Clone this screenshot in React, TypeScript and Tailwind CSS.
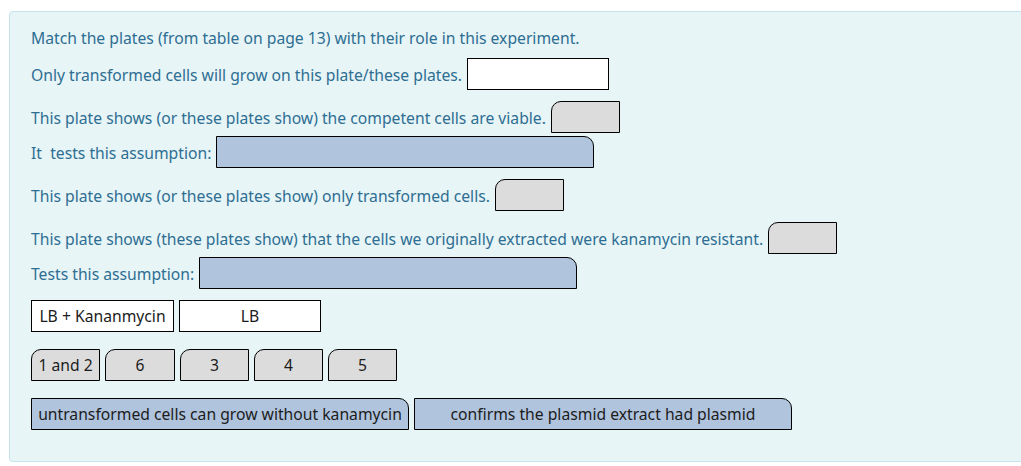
const text = "text-[#2e6e92]";

function Drop(props: { kind: "white" | "gray" | "blue"; w: string }) {
  const styles = {
    white: "bg-white",
    gray: "bg-[#dcdcdc] rounded-tl-[10px]",
    blue: "bg-[#b0c4de] rounded-tr-[10px]",
  };
  return (
    <span
      className={`ml-[5px] inline-block h-[32px] border border-black ${props.w} ${styles[props.kind]}`}
    />
  );
}

function Item(props: { label: string; kind: "white" | "gray" | "blue"; w: string }) {
  const styles = {
    white: "bg-white",
    gray: "bg-[#dcdcdc] rounded-tl-[10px]",
    blue: "bg-[#b0c4de] rounded-tr-[10px]",
  };
  return (
    <div
      className={`flex h-[32px] items-center justify-center border border-black pt-[2px] text-[#1c1c1c] whitespace-nowrap ${props.w} ${styles[props.kind]}`}
    >
      {props.label}
    </div>
  );
}

export default function App() {
  return (
    <div className="h-[466px] w-[1021px] overflow-hidden bg-white pt-[11px] pl-[9px] font-['Noto_Sans',sans-serif] text-[15.7px]">
      <div className="w-[1030px] rounded-[4px] border border-[#c4e5ec] bg-[#e7f5f7] pt-[14px] pb-[31px] pl-[21px]">
        <div className={`flex h-[24px] items-center pt-[2px] ${text}`}>
          Match the plates (from table on page 13) with their role in this experiment.
        </div>

        <div className={`mt-[8px] flex items-center ${text}`}>
          <span className="mt-[3px]">Only transformed cells will grow on this plate/these plates.</span>
          <Drop kind="white" w="w-[142px]" />
        </div>

        <div className={`mt-[11px] flex items-center ${text}`}>
          <span className="mt-[3px]">This plate shows (or these plates show) the competent cells are viable.</span>
          <Drop kind="gray" w="w-[69px]" />
        </div>

        <div className={`mt-[3px] flex items-center ${text}`}>
          <span className="mt-[3px] whitespace-pre">It  tests this assumption:</span>
          <Drop kind="blue" w="w-[378px]" />
        </div>

        <div className={`mt-[11px] flex items-center ${text}`}>
          <span className="mt-[3px]">This plate shows (or these plates show) only transformed cells.</span>
          <Drop kind="gray" w="w-[69px]" />
        </div>

        <div className={`mt-[11px] flex items-center ${text}`}>
          <span className="mt-[3px]">
            This plate shows (these plates show) that the cells we originally extracted were kanamycin resistant.
          </span>
          <Drop kind="gray" w="w-[69px]" />
        </div>

        <div className={`mt-[3px] flex items-center ${text}`}>
          <span className="mt-[3px]">Tests this assumption:</span>
          <Drop kind="blue" w="w-[378px]" />
        </div>

        <div className="mt-[11px] flex gap-[5px]">
          <Item label="LB + Kananmycin" kind="white" w="w-[143px]" />
          <Item label="LB" kind="white" w="w-[142px]" />
        </div>

        <div className="mt-[17px] flex gap-[5px]">
          <Item label="1 and 2" kind="gray" w="w-[69px]" />
          <Item label="6" kind="gray" w="w-[70px]" />
          <Item label="3" kind="gray" w="w-[69px]" />
          <Item label="4" kind="gray" w="w-[69px]" />
          <Item label="5" kind="gray" w="w-[69px]" />
        </div>

        <div className="mt-[17px] flex gap-[5px]">
          <Item label="untransformed cells can grow without kanamycin" kind="blue" w="w-[378px]" />
          <Item label="confirms the plasmid extract had plasmid" kind="blue" w="w-[378px]" />
        </div>
      </div>
    </div>
  );
}
